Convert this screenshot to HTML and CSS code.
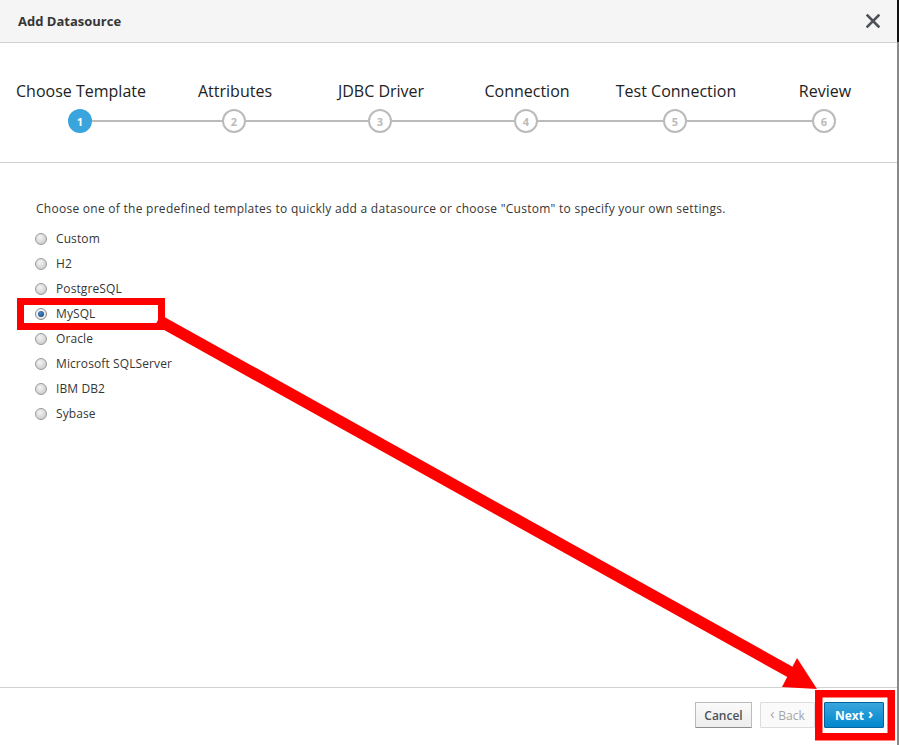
FILE: index.html
```html
<!DOCTYPE html>
<html>
<head>
<meta charset="utf-8">
<title>Add Datasource</title>
<link rel="stylesheet" href="styles.css">
</head>
<body>
<div class="modal">
  <header class="modal-header">
    <h1 class="modal-title">Add Datasource</h1>
    <svg class="close" width="14" height="14" viewBox="0 0 14 14"><path d="M1.5 1.5 L12.5 12.5 M12.5 1.5 L1.5 12.5" stroke="#4d5258" stroke-width="2.6" stroke-linecap="square"/></svg>
  </header>

  <nav class="wizard">
    <div class="step active"><div class="step-label">Choose Template</div><div class="step-bar"><span class="seg hidden"></span><span class="num">1</span><span class="seg"></span></div></div>
    <div class="step"><div class="step-label">Attributes</div><div class="step-bar"><span class="seg"></span><span class="num">2</span><span class="seg"></span></div></div>
    <div class="step"><div class="step-label">JDBC Driver</div><div class="step-bar"><span class="seg"></span><span class="num">3</span><span class="seg"></span></div></div>
    <div class="step"><div class="step-label">Connection</div><div class="step-bar"><span class="seg"></span><span class="num">4</span><span class="seg"></span></div></div>
    <div class="step"><div class="step-label">Test Connection</div><div class="step-bar"><span class="seg"></span><span class="num">5</span><span class="seg"></span></div></div>
    <div class="step"><div class="step-label">Review</div><div class="step-bar"><span class="seg"></span><span class="num">6</span><span class="seg hidden"></span></div></div>
  </nav>

  <main class="modal-body">
    <p class="intro">Choose one of the predefined templates to quickly add a datasource or choose "Custom" to specify your own settings.</p>
    <ul class="options">
      <li class="option"><span class="radio"></span>Custom</li>
      <li class="option"><span class="radio"></span>H2</li>
      <li class="option"><span class="radio"></span>PostgreSQL</li>
      <li class="option"><span class="radio checked"></span>MySQL</li>
      <li class="option"><span class="radio"></span>Oracle</li>
      <li class="option"><span class="radio"></span>Microsoft SQLServer</li>
      <li class="option"><span class="radio"></span>IBM DB2</li>
      <li class="option"><span class="radio"></span>Sybase</li>
    </ul>
  </main>

  <footer class="modal-footer">
    <button class="btn btn-default btn-cancel">Cancel</button>
    <button class="btn btn-disabled btn-back"><span class="chev">&lsaquo;</span> Back</button>
    <button class="btn btn-primary btn-next">Next <span class="chev">&rsaquo;</span></button>
  </footer>
</div>

<svg class="annotation" width="899" height="745" viewBox="0 0 899 745">
  <rect x="20.5" y="301.5" width="141" height="25" fill="none" stroke="#ff0000" stroke-width="7"/>
  <line x1="158" y1="320" x2="792" y2="673" stroke="#ff0000" stroke-width="11.5"/>
  <polygon points="797,658 782,687 817,689" fill="#ff0000"/>
  <rect x="818.75" y="693.75" width="72.5" height="43" fill="none" stroke="#ff0000" stroke-width="7.5"/>
</svg>
</body>
</html>
```

FILE: styles.css
```css
* {
  box-sizing: border-box;
}

html, body {
  margin: 0;
  padding: 0;
  height: 745px;
  overflow: hidden;
}

body {
  position: relative;
  font-family: "Open Sans", "Noto Sans", "Liberation Sans", sans-serif;
  color: #363636;
  background: linear-gradient(#111 0 42px, #8a8a8a 42px);
}

.modal {
  width: 897px;
  height: 745px;
  background: #fff;
  display: flex;
  flex-direction: column;
}

.modal-header {
  height: 43px;
  flex: none;
  background: #f5f5f5;
  border-bottom: 1px solid #d1d1d1;
  display: flex;
  align-items: center;
  justify-content: space-between;
  padding: 0 17px 0 18px;
}

.modal-title {
  margin: 0;
  font-size: 13px;
  font-weight: 700;
  color: #363636;
  line-height: 18px;
}

.close {
  display: block;
  margin-top: -1px;
}

.wizard {
  flex: none;
  height: 120px;
  border-bottom: 1px solid #d1d1d1;
  display: grid;
  grid-template-columns: 148px 160px 132px 160px 138px 160px;
  padding: 37px 0 0 6px;
}

.step {
  display: flex;
  flex-direction: column;
  align-items: stretch;
}

.step-label {
  text-align: center;
  font-size: 16px;
  line-height: 22px;
  color: #222;
  white-space: nowrap;
  padding-left: 2px;
}

.step-bar {
  margin-top: 7px;
  height: 24px;
  display: flex;
  align-items: center;
}

.seg {
  flex: 1;
  height: 2px;
  background: #bbb;
}

.seg.hidden {
  background: transparent;
}

.num {
  flex: none;
  width: 24px;
  height: 24px;
  border-radius: 50%;
  border: 2px solid #bbb;
  background: #fff;
  color: #bbb;
  font-size: 11px;
  font-weight: 700;
  display: flex;
  align-items: center;
  justify-content: center;
  line-height: 1;
}

.step.active .num {
  background: #39a5dc;
  border-color: #39a5dc;
  color: #fff;
}

.modal-body {
  flex: 1;
  padding: 37px 0 0 36px;
}

.intro {
  margin: 0 0 8px;
  font-size: 12px;
  line-height: 18px;
  letter-spacing: 0.27px;
  color: #363636;
}

.options {
  list-style: none;
  margin: 0;
  padding: 0;
}

.option {
  height: 25px;
  display: flex;
  align-items: center;
  font-size: 12px;
  letter-spacing: 0.1px;
  color: #363636;
}

.radio {
  width: 12px;
  height: 12px;
  margin-left: -1px;
  margin-right: 9px;
  border-radius: 50%;
  border: 1px solid #9a9a9a;
  background: radial-gradient(circle at 40% 35%, #f4f4f4 0%, #d8d8d8 55%, #c2c2c2 100%);
  display: flex;
  align-items: center;
  justify-content: center;
}

.radio.checked {
  border-color: #8c8c8c;
  background: radial-gradient(circle at 40% 35%, #fdfdfd 0%, #e8e8e8 60%, #d0d0d0 100%);
}

.radio.checked::after {
  content: "";
  width: 6px;
  height: 6px;
  border-radius: 50%;
  background: radial-gradient(circle at 40% 35%, #4c8dc7 0%, #1d5590 70%, #153e6c 100%);
}

.modal-footer {
  flex: none;
  height: 58px;
  border-top: 1px solid #d1d1d1;
  display: flex;
  justify-content: flex-end;
  align-items: flex-start;
  gap: 8px;
  padding: 14px 13px 0 0;
}

.btn {
  height: 26px;
  padding: 0;
  font-family: "Open Sans", "Noto Sans", "Liberation Sans", sans-serif;
  font-size: 12px;
  font-weight: 600;
  border-radius: 1px;
  display: flex;
  align-items: center;
  justify-content: center;
  gap: 4px;
}

.chev {
  font-size: 14px;
  line-height: 1;
  margin-top: -2px;
}

.btn-cancel {
  width: 57px;
}

.btn-back {
  width: 55px;
}

.btn-next {
  width: 60px;
  margin-left: 1px;
}

.btn-default {
  background: linear-gradient(#fafafa, #ededed);
  border: 1px solid #bbb;
  border-bottom-color: #8b8d8f;
  color: #4d5258;
}

.btn-disabled {
  background: #fafafa;
  border: 1px solid #ddd;
  color: #a5a5a5;
  font-weight: 400;
}

.btn-primary {
  background: linear-gradient(#39a5dc, #0088ce);
  border: 1px solid #00659c;
  color: #fff;
  font-weight: 700;
}

.annotation {
  position: absolute;
  top: 0;
  left: 0;
  pointer-events: none;
}
```
